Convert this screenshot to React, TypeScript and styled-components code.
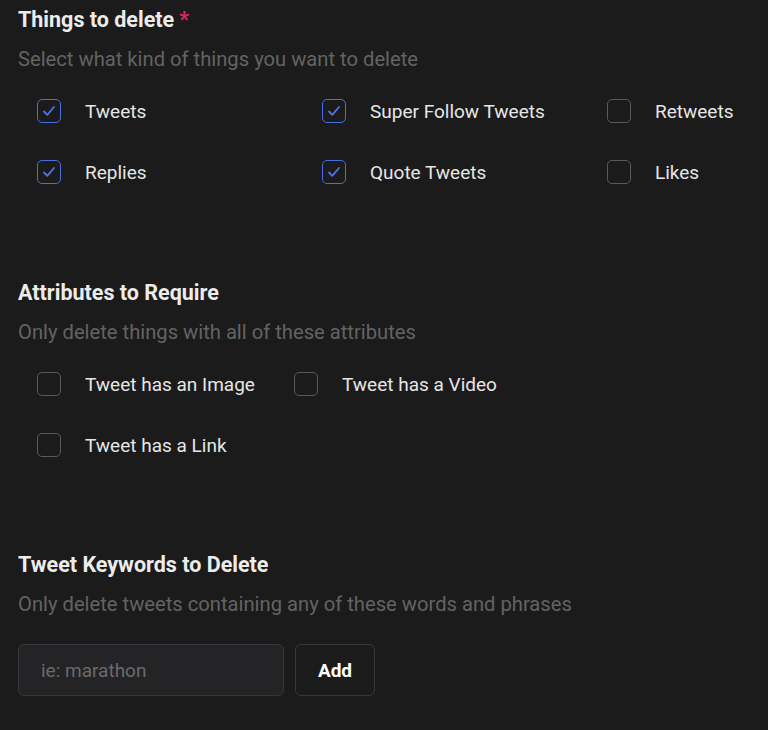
import React from 'react';
import styled, { createGlobalStyle } from 'styled-components';

const GlobalStyle = createGlobalStyle`
  html, body {
    margin: 0;
    padding: 0;
    background: #1b1b1b;
  }
  body {
    font-family: Roboto, 'Liberation Sans', sans-serif;
  }
`;

const Page = styled.div`
  background: #1b1b1b;
  min-height: 730px;
  padding: 6px 18px 0;
  box-sizing: border-box;
`;

const Section = styled.section<{ $gap?: number }>`
  margin-bottom: ${(p) => p.$gap ?? 0}px;
`;

const Title = styled.h2`
  margin: 0;
  font-size: 21.5px;
  line-height: 28px;
  font-weight: 700;
  color: #ececec;
`;

const Required = styled.span`
  color: #e0245e;
  margin-left: 5px;
`;

const Subtitle = styled.p`
  margin: 13px 0 0;
  font-size: 20.2px;
  line-height: 24px;
  color: #636363;
`;

const Options = styled.div<{ $cols: string }>`
  display: grid;
  grid-template-columns: ${(p) => p.$cols};
  row-gap: 37px;
  margin-top: 28px;
  padding-left: 19px;
`;

const Option = styled.label`
  display: flex;
  align-items: center;
  gap: 24px;
  height: 24px;
  font-size: 19px;
  color: #e6e6e6;
  white-space: nowrap;
  cursor: pointer;
`;

const Box = styled.span<{ $checked: boolean }>`
  width: 24px;
  height: 24px;
  box-sizing: border-box;
  border-radius: 5px;
  border: 1.5px solid ${(p) => (p.$checked ? '#4a6ee0' : '#5a5a5a')};
  display: flex;
  align-items: center;
  justify-content: center;
  flex-shrink: 0;
`;

const InputRow = styled.div`
  display: flex;
  gap: 11px;
  margin-top: 28px;
`;

const TextInput = styled.input`
  width: 266px;
  height: 52px;
  box-sizing: border-box;
  background: #242427;
  border: 1px solid #38383c;
  border-radius: 6px;
  padding: 0 22px;
  font-family: Roboto, 'Liberation Sans', sans-serif;
  font-size: 19px;
  color: #e6e6e6;
  outline: none;

  &::placeholder {
    color: #6a6a6a;
  }
`;

const AddButton = styled.button`
  width: 80px;
  height: 52px;
  box-sizing: border-box;
  background: #1b1b1b;
  border: 1px solid #38383c;
  border-radius: 6px;
  font-family: Roboto, 'Liberation Sans', sans-serif;
  font-size: 19px;
  font-weight: 700;
  color: #ffffff;
  cursor: pointer;
`;

const Check = () => (
  <svg width="16" height="16" viewBox="0 0 16 16" fill="none">
    <path d="M3 8.5 L6.3 11.8 L13 4" stroke="#4f74e6" strokeWidth="1.8" strokeLinecap="round" strokeLinejoin="round" />
  </svg>
);

type Item = { label: string; checked: boolean };

const CheckOption = ({ label, checked }: Item) => (
  <Option>
    <Box $checked={checked}>{checked && <Check />}</Box>
    {label}
  </Option>
);

const thingsToDelete: Item[] = [
  { label: 'Tweets', checked: true },
  { label: 'Super Follow Tweets', checked: true },
  { label: 'Retweets', checked: false },
  { label: 'Replies', checked: true },
  { label: 'Quote Tweets', checked: true },
  { label: 'Likes', checked: false },
];

const attributes: Item[] = [
  { label: 'Tweet has an Image', checked: false },
  { label: 'Tweet has a Video', checked: false },
  { label: 'Tweet has a Link', checked: false },
];

const App = () => {
  return (
    <>
      <GlobalStyle />
      <Page>
        <Section $gap={95}>
          <Title>
            Things to delete<Required>*</Required>
          </Title>
          <Subtitle>Select what kind of things you want to delete</Subtitle>
          <Options $cols="285px 285px 1fr">
            {thingsToDelete.map((item) => (
              <CheckOption key={item.label} {...item} />
            ))}
          </Options>
        </Section>

        <Section $gap={94}>
          <Title>Attributes to Require</Title>
          <Subtitle>Only delete things with all of these attributes</Subtitle>
          <Options $cols="257px 1fr">
            {attributes.map((item) => (
              <CheckOption key={item.label} {...item} />
            ))}
          </Options>
        </Section>

        <Section>
          <Title>Tweet Keywords to Delete</Title>
          <Subtitle>Only delete tweets containing any of these words and phrases</Subtitle>
          <InputRow>
            <TextInput placeholder="ie: marathon" />
            <AddButton>Add</AddButton>
          </InputRow>
        </Section>
      </Page>
    </>
  );
};

export default App;
